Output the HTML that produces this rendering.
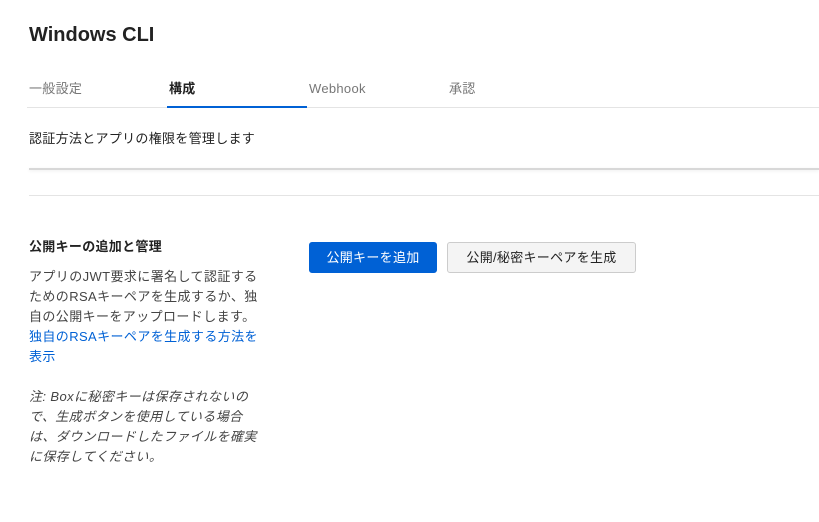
<!DOCTYPE html>
<html><head><meta charset="utf-8"><style>
*{margin:0;padding:0;box-sizing:border-box}
body{width:819px;height:522px;background:#fff;font-family:"Liberation Sans","Noto Sans CJK JP",sans-serif;color:#222;position:relative;overflow:hidden}
.a{position:absolute;white-space:nowrap}
h1{position:absolute;left:29px;top:24px;font-size:20px;font-weight:bold;color:#222}
.tab{position:absolute;top:79px;height:20px;line-height:20px;font-size:13px;color:#777;letter-spacing:0.3px}
.body{position:absolute;left:29px;top:267px;font-size:13px;line-height:20px;color:#444;white-space:nowrap;letter-spacing:0.4px}
.btn{position:absolute;top:242px;height:31px;border-radius:3px;font-size:13px;line-height:29px;text-align:center;letter-spacing:0.3px}
</style></head><body>
<h1>Windows CLI</h1>
<div class="tab" style="left:29px">一般設定</div>
<div class="tab" style="left:169px;color:#222;font-weight:bold">構成</div>
<div class="tab" style="left:309px">Webhook</div>
<div class="tab" style="left:449px">承認</div>
<div class="a" style="left:27px;top:107px;width:792px;height:1px;background:#e4e4e4"></div>
<div class="a" style="left:167px;top:106px;width:140px;height:2px;background:#0061d5"></div>
<div class="a" style="left:29px;top:129px;font-size:13px;color:#222;letter-spacing:0.3px;line-height:20px">認証方法とアプリの権限を管理します</div>
<div class="a" style="left:29px;top:168px;width:790px;height:2px;background:#d8d8d8;box-shadow:0 1px 3px rgba(0,0,0,0.08)"></div>
<div class="a" style="left:29px;top:195px;width:790px;height:1px;background:#e4e4e4"></div>
<div class="a" style="left:29px;top:237px;font-size:13px;font-weight:bold;color:#222;line-height:20px;letter-spacing:0.3px">公開キーの追加と管理</div>
<div class="body">アプリのJWT要求に署名して認証する<br>ためのRSAキーペアを生成するか、独<br>自の公開キーをアップロードします。<br><span style="color:#0061d5">独自のRSAキーペアを生成する方法を<br>表示</span><br><br><i>注: Boxに秘密キーは保存されないの<br>で、生成ボタンを使用している場合<br>は、ダウンロードしたファイルを確実<br>に保存してください。</i></div>
<div class="btn" style="left:309px;width:128px;background:#0061d5;color:#fff;border:1px solid #0061d5">公開キーを追加</div>
<div class="btn" style="left:447px;width:189px;background:#f4f4f4;color:#222;border:1px solid #ccc">公開/秘密キーペアを生成</div>
</body></html>
